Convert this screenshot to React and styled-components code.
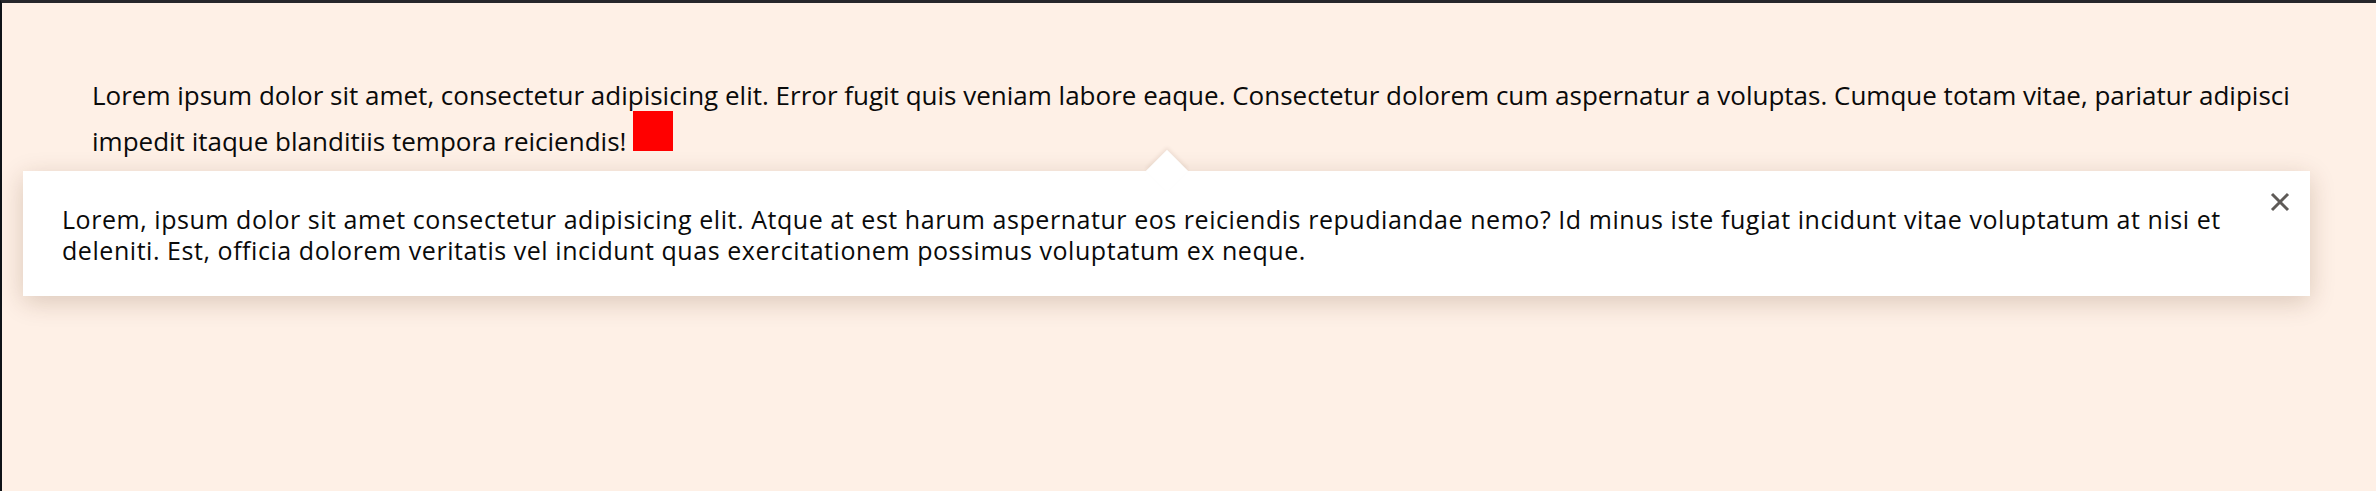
import React from 'react'
import styled, { createGlobalStyle } from 'styled-components'

const Global = createGlobalStyle`
  html, body { margin: 0; background: #fff; }
`

export default function App() {
  return (
    <Page>
      <Global />
      <Lead>
        Lorem ipsum dolor sit amet, consectetur adipisicing elit. Error fugit quis veniam labore eaque.
        Consectetur dolorem cum aspernatur a voluptas. Cumque totam vitae, pariatur adipisci impedit itaque
        blanditiis tempora reiciendis! <Anchor />
      </Lead>
      <Popover role="dialog">
        <PopoverText>
          Lorem, ipsum dolor sit amet consectetur adipisicing elit. Atque at est harum aspernatur eos reiciendis
          repudiandae nemo? Id minus iste fugiat incidunt vitae voluptatum at nisi et deleniti. Est, officia
          dolorem veritatis vel incidunt quas exercitationem possimus voluptatum ex neque.
        </PopoverText>
        <CloseButton aria-label="Close">
          <svg width="20" height="20" viewBox="0 0 20 20">
            <path d="M2 2 L18 18 M18 2 L2 18" stroke="currentColor" strokeWidth="3" />
          </svg>
        </CloseButton>
      </Popover>
    </Page>
  )
}

const Page = styled.div`
  position: relative;
  box-sizing: border-box;
  height: 491px;
  background: #fef0e6;
  border-top: 3px solid #26272b;
  border-left: 2px solid #0f1318;
  padding: 76px 70px 0 90px;
  font-family: "Open Sans", "Noto Sans", sans-serif;
  color: #0a0a0a;
`
const Lead = styled.p`
  margin: 0;
  font-size: 26px;
  line-height: 32px;
`
const Anchor = styled.span`
  display: inline-block;
  width: 40px;
  height: 40px;
  background: #ff0000;
  vertical-align: baseline;
`
const Popover = styled.div`
  position: absolute;
  top: 168px;
  left: 21px;
  width: 2287px;
  box-sizing: border-box;
  display: flex;
  align-items: flex-start;
  gap: 38px;
  padding: 33px 20px 30px 39px;
  background: #fff;
  box-shadow: 0 6px 24px rgba(80, 40, 10, 0.2);
  z-index: 1;
  &::before {
    content: "";
    position: absolute;
    top: -15px;
    left: 50%;
    width: 30px;
    height: 30px;
    margin-left: -15px;
    background: #fff;
    transform: rotate(45deg);
    box-shadow: -2px -2px 4px rgba(80, 40, 10, 0.08);
    z-index: -1;
  }
`
const PopoverText = styled.p`
  flex: 1;
  margin: 0;
  font-size: 25px;
  letter-spacing: 0.55px;
  line-height: 31px;
  color: #0a0a0a;
`
const CloseButton = styled.button`
  flex: none;
  margin-top: -12px;
  padding: 0;
  border: none;
  background: none;
  color: #5e5a57;
  width: 20px;
  height: 20px;
  cursor: pointer;
  svg { display: block; }
`
